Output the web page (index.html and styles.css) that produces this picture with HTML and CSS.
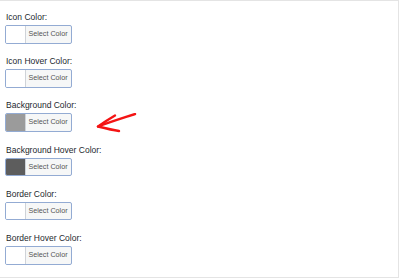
FILE: index.html
```html
<!DOCTYPE html>
<html lang="en">
<head>
	<meta charset="UTF-8">
	<title>Color Settings</title>
	<meta name="viewport" content="width=device-width, initial-scale=1">
	<link rel="stylesheet" href="styles.css">
</head>
<body>
	<div class="panel">
		<div class="field">
			<label class="field-label">Icon Color:</label>
			<button type="button" class="color-btn"><span class="swatch"></span><span class="btn-text">Select Color</span></button>
		</div>
		<div class="field">
			<label class="field-label">Icon Hover Color:</label>
			<button type="button" class="color-btn"><span class="swatch"></span><span class="btn-text">Select Color</span></button>
		</div>
		<div class="field field-marked">
			<label class="field-label">Background Color:</label>
			<button type="button" class="color-btn"><span class="swatch swatch-gray"></span><span class="btn-text">Select Color</span></button>
			<!-- 빨간 화살표 -->
			<svg class="arrow" width="44" height="22" viewBox="0 0 44 22">
				<path d="M39 1 C30 4 14 9 2 13.5" fill="none" stroke="#f41414" stroke-width="2.4" stroke-linecap="round"/>
				<path d="M19 2.5 C13 6 7 10 2 13.5 C8 15 16 17 23 18" fill="none" stroke="#f41414" stroke-width="2.4" stroke-linecap="round" stroke-linejoin="round"/>
			</svg>
		</div>
		<div class="field">
			<label class="field-label">Background Hover Color:</label>
			<button type="button" class="color-btn"><span class="swatch swatch-dark"></span><span class="btn-text">Select Color</span></button>
		</div>
		<div class="field">
			<label class="field-label">Border Color:</label>
			<button type="button" class="color-btn"><span class="swatch"></span><span class="btn-text">Select Color</span></button>
		</div>
		<div class="field">
			<label class="field-label">Border Hover Color:</label>
			<button type="button" class="color-btn"><span class="swatch"></span><span class="btn-text">Select Color</span></button>
		</div>
	</div>
</body>
</html>
```

FILE: styles.css
```css
html, body { margin: 0; padding: 0; background: #fff; }
body { font-family: "Liberation Sans", Arial, sans-serif; }

.panel { box-sizing: border-box; width: 399px; height: 278px; border: 1px solid #e4e4e4; border-left: none; padding: 11.1px 0 0 5px; background: #fff; }

.field { position: relative; display: flex; flex-direction: column; align-items: flex-start; height: 44.2px; }
.field-label { display: block; padding-left: 1px; font-size: 8.5px; line-height: 10px; color: #23282d; margin-bottom: 3px; }

.color-btn { display: flex; box-sizing: border-box; width: 66.5px; height: 18.5px; padding: 0; border: 1px solid #93abd3; border-radius: 2px; background: #f6f7f7; overflow: hidden; cursor: pointer; }
.color-btn:focus { outline: none; }
.swatch { width: 18.5px; height: 100%; background: #fff; border-right: 1px solid #cfd3d8; }
.swatch-gray { background: #9b9b9b; }
.swatch-dark { background: #5d5d5d; }
.btn-text { flex: 1; font-family: "Liberation Sans", Arial, sans-serif; font-size: 7.2px; line-height: 16.5px; color: #555; text-align: center; }

.arrow { position: absolute; left: 90.5px; top: 13px; }
```
